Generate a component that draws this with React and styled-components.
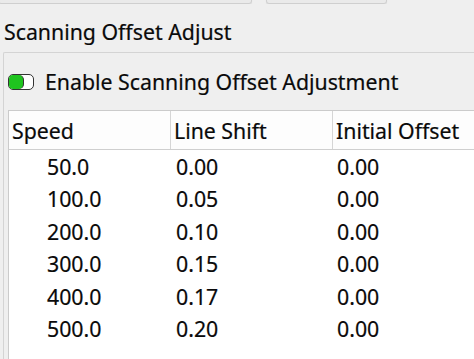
import React from 'react';
import styled, { createGlobalStyle } from 'styled-components';

const rows = [
  { speed: '50.0', shift: '0.00', offset: '0.00' },
  { speed: '100.0', shift: '0.05', offset: '0.00' },
  { speed: '200.0', shift: '0.10', offset: '0.00' },
  { speed: '300.0', shift: '0.15', offset: '0.00' },
  { speed: '400.0', shift: '0.17', offset: '0.00' },
  { speed: '500.0', shift: '0.20', offset: '0.00' },
];

const GlobalStyle = createGlobalStyle`
  html, body {
    margin: 0;
    padding: 0;
    background: #efefef;
    overflow: hidden;
  }
  body {
    font-family: "Noto Sans", "Open Sans", sans-serif;
    color: #0a0a0a;
    -webkit-text-stroke: 0.2px #0a0a0a;
  }
`;

const Page = styled.div`
  width: 474px;
  height: 359px;
  overflow: hidden;
  display: flex;
  flex-direction: column;
`;

const TabStrip = styled.div`
  height: 4px;
  display: flex;
  align-items: flex-end;
  gap: 14px;
  overflow: hidden;
`;

const Tab = styled.div`
  flex: none;
  width: ${(p) => p.w}px;
  height: 20px;
  margin-left: ${(p) => p.ml || 0}px;
  background: #eaeaea;
  border: 1px solid #cfcfcf;
  border-radius: 3px;
  box-shadow: 0 1px 1px rgba(0, 0, 0, 0.08);
`;

const Title = styled.div`
  font-size: 21.3px;
  line-height: 28px;
  padding: 14px 0 0 4px;
  height: 34px;
`;

const GroupBox = styled.div`
  flex: 1;
  margin-left: 3px;
  margin-right: -10px;
  border-top: 1px solid #d4d4d4;
  border-left: 1px solid #d4d4d4;
  border-top-left-radius: 2px;
  padding: 0 0 0 4px;
  display: flex;
  flex-direction: column;
`;

const ToggleRow = styled.div`
  display: flex;
  align-items: center;
  gap: 11px;
  height: 57px;
  font-size: 21.3px;
`;

const Toggle = styled.div`
  width: 24px;
  height: 14px;
  border: 1px solid #333;
  border-radius: 5px;
  background: #fff;
  display: flex;
  overflow: hidden;
  margin-top: 1px;
`;

const ToggleFill = styled.div`
  width: 14px;
  background: #1fc41f;
  border-right: 1px solid #333;
  border-radius: 0 5px 5px 0;
`;

const Table = styled.div`
  flex: 1;
  background: #fff;
  border-top: 1px solid #cbcbcb;
  border-left: 1px solid #cbcbcb;
`;

const HeaderRow = styled.div`
  display: grid;
  grid-template-columns: 162px 162px 1fr;
  height: 38px;
  border-bottom: 1px solid #cfcfcf;
  background: #fdfdfd;
`;

const HeaderCell = styled.div`
  display: flex;
  align-items: center;
  padding-left: 3px;
  font-size: 21.3px;
  white-space: nowrap;
  border-right: 1px solid #d6d6d6;
`;

const DataRow = styled.div`
  display: grid;
  grid-template-columns: 162px 162px 1fr;
  height: 32.5px;
  align-items: center;
  font-size: 21.3px;
`;

const Cell = styled.div`
  padding-left: ${(p) => p.pad}px;
`;

export default function App() {
  return (
    <Page>
      <GlobalStyle />
      <TabStrip>
        <Tab w={252} ml={-2} />
        <Tab w={119} />
      </TabStrip>
      <Title>Scanning Offset Adjust</Title>
      <GroupBox>
        <ToggleRow>
          <Toggle>
            <ToggleFill />
          </Toggle>
          <span>Enable Scanning Offset Adjustment</span>
        </ToggleRow>
        <Table>
          <HeaderRow>
            <HeaderCell>Speed</HeaderCell>
            <HeaderCell>Line Shift</HeaderCell>
            <HeaderCell>Initial Offset</HeaderCell>
          </HeaderRow>
          {rows.map((r) => (
            <DataRow key={r.speed}>
              <Cell pad={38}>{r.speed}</Cell>
              <Cell pad={5}>{r.shift}</Cell>
              <Cell pad={4}>{r.offset}</Cell>
            </DataRow>
          ))}
        </Table>
      </GroupBox>
    </Page>
  );
}
